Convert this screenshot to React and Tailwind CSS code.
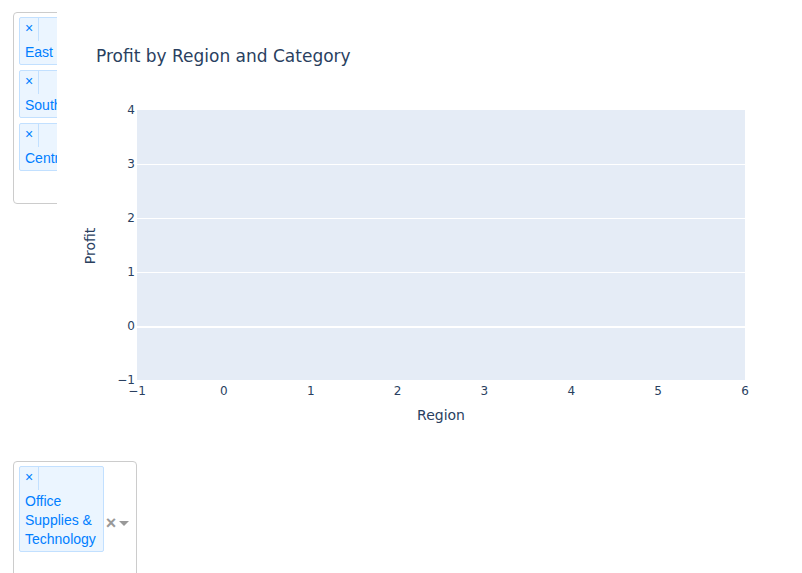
import React from 'react';

const TAG_FONT = { fontFamily: '"Liberation Sans", Arial, sans-serif' };
const PLOT_FONT = '"DejaVu Sans", Verdana, sans-serif';

// a selected value in the multi dropdown
const Tag = ({ label }) => (
  <div className="w-fit max-w-[85px] border border-[#c2e0ff] bg-[#ebf5ff] text-[#007eff] rounded-[2px] text-[14px] leading-[19px]">
    <div className="flex">
      <span className="pt-[1px] pb-[3px] px-[5px] border-r border-[#c2e0ff]">×</span>
    </div>
    <div className="py-[2px] px-[5px]">{label}</div>
  </div>
);

const Dropdown = ({ values }) => (
  <div className="flex w-[124px] border border-[#ccc] rounded-[4px] bg-white" style={TAG_FONT}>
    <div className="flex-1 flex flex-col gap-[5px] pt-[4px] pb-[32px] pl-[5px]">
      {values.map(v => (
        <Tag key={v} label={v} />
      ))}
    </div>
    <div className="w-[12px] flex items-center justify-center text-[18px] leading-none font-bold text-[#999]">×</div>
    <div className="w-[14px] flex items-center justify-center">
      <span className="block w-0 h-0 border-t-[5px] border-x-[5px] border-t-[#999] border-x-transparent" />
    </div>
    <div className="w-[5px]" />
  </div>
);

const Chart = () => {
  const left = 80;
  const top = 100;
  const w = 608;
  const h = 270;
  const yStep = h / 5;
  const xStep = w / 7;
  const yTicks = [4, 3, 2, 1, 0, -1];
  const xTicks = [-1, 0, 1, 2, 3, 4, 5, 6];
  const fmt = n => (n < 0 ? `\u2212${Math.abs(n)}` : `${n}`);

  return (
    <svg width="745" height="450" className="block bg-white" style={{ fontFamily: PLOT_FONT }}>
      <rect x={left} y={top} width={w} height={h} fill="#E5ECF6" />
      {/* grid */}
      {[1, 2, 3].map(i => (
        <rect key={i} x={left} y={top + i * yStep} width={w} height="1" fill="#fff" />
      ))}
      <rect x={left} y={top + 4 * yStep} width={w} height="2" fill="#fff" />

      {yTicks.map((t, i) => (
        <text key={t} x="78" y={top + i * yStep + 4} textAnchor="end" fontSize="12" fill="#2a3f5f">
          {fmt(t)}
        </text>
      ))}
      {xTicks.map((t, i) => (
        <text key={t} x={left + i * xStep} y="385" textAnchor="middle" fontSize="12" fill="#2a3f5f">
          {fmt(t)}
        </text>
      ))}

      <text x="39" y="52" fontSize="17" fill="#2a3f5f">Profit by Region and Category</text>
      <text x={left + w / 2} y="410" textAnchor="middle" fontSize="14" fill="#2a3f5f">Region</text>
      <text x="38" y="236" textAnchor="middle" fontSize="14" fill="#2a3f5f" transform="rotate(-90 38 236)">
        Profit
      </text>
    </svg>
  );
};

const App = () => {
  return (
    <div className="w-[802px] h-[573px] overflow-hidden bg-white">
      <div className="flex items-start pl-[13px]">
        {/* region filter, the graph sits over its right part */}
        <div className="w-[44px] shrink-0 mt-[12px] overflow-hidden">
          <Dropdown values={['East', 'South', 'Central']} />
        </div>
        <div className="mt-[10px] shrink-0">
          <Chart />
        </div>
      </div>

      {/* category filter */}
      <div className="pl-[13px] pt-[1px]">
        <Dropdown values={['Office Supplies & Technology']} />
      </div>
    </div>
  );
};

export default App;
